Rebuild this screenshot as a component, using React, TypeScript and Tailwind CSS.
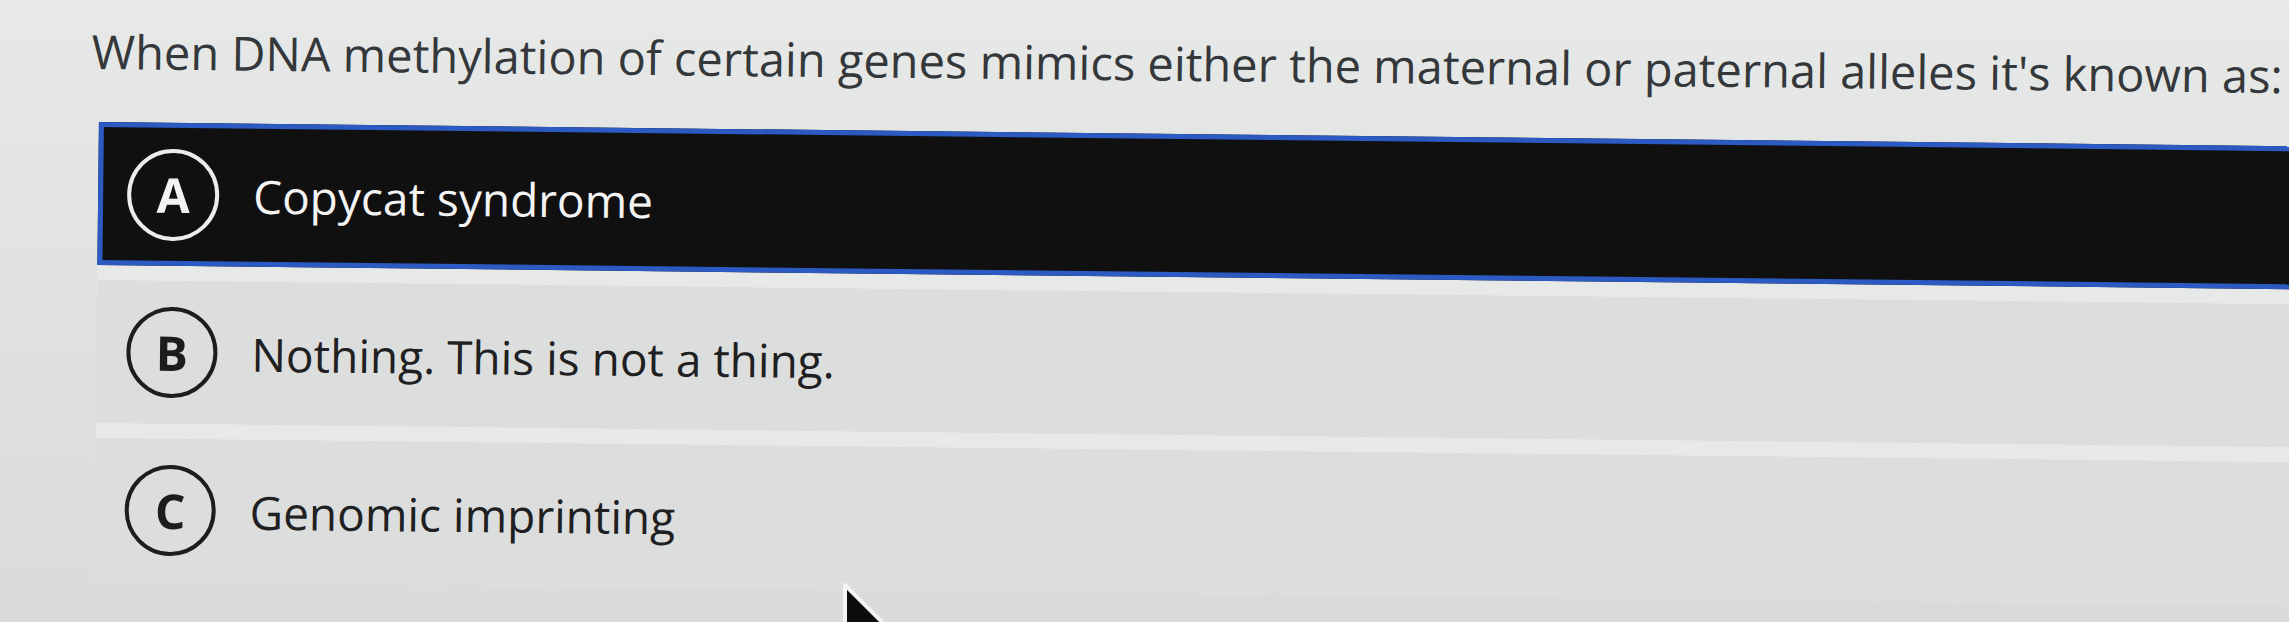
import React from 'react';

type Choice = {
  letter: string;
  text: string;
  selected?: boolean;
};

const choices: Choice[] = [
  { letter: 'A', text: 'Copycat syndrome', selected: true },
  { letter: 'B', text: 'Nothing. This is not a thing.' },
  { letter: 'C', text: 'Genomic imprinting' },
];

const ChoiceRow: React.FC<{ choice: Choice }> = ({ choice }) => {
  const { letter, text, selected } = choice;

  return (
    <div
      className={
        selected
          ? 'h-[143px] flex items-center pl-[24px] bg-[#101010] border-y-[5px] border-l-[5px] border-[#2a5ac2]'
          : 'h-[143px] flex items-center pl-[30px] bg-[#dcdedd]'
      }
    >
      {/* letter badge */}
      <div
        className={
          selected
            ? 'w-[92px] h-[92px] shrink-0 rounded-full border-[4px] border-[#ececec] flex items-center justify-center text-[48px] font-bold text-[#f2f2f2]'
            : 'w-[91px] h-[91px] shrink-0 rounded-full border-[4px] border-[#1c1d1e] flex items-center justify-center text-[48px] font-bold text-[#1c1d1e]'
        }
      >
        {letter}
      </div>
      <span
        className={
          selected
            ? 'ml-[34px] text-[46px] leading-none text-[#f4f4f4]'
            : 'ml-[34px] text-[46px] leading-none text-[#1e2022]'
        }
      >
        {text}
      </span>
    </div>
  );
};

export default function App() {
  return (
    <div
      className="relative w-full h-[622px] overflow-hidden bg-gradient-to-b from-[#e7e9e8] to-[#d9dbda]"
      style={{ fontFamily: '"Open Sans", "Noto Sans", sans-serif' }}
    >
      <div className="w-[2440px] origin-[0_300px] rotate-[0.63deg] pt-[19px] pl-[89px]">
        <p className="text-[47px] leading-[63px] text-[#35383b] whitespace-nowrap">
          When DNA methylation of certain genes mimics either the maternal or paternal alleles it's known as:
        </p>

        <div className="mt-[39px] ml-[8px] flex flex-col gap-[15px] bg-[#e7e9e8]">
          {choices.map((c) => (
            <ChoiceRow key={c.letter} choice={c} />
          ))}
        </div>
      </div>

      {/* mouse pointer */}
      <svg
        className="absolute left-[841px] top-[580px]"
        width="64"
        height="90"
        viewBox="0 0 16 22"
      >
        <path
          d="M1 1 L1 18 L5 14 L8 21 L10.5 20 L7.5 13 L13 13 Z"
          fill="#0c0c0c"
          stroke="#f4f4f4"
          strokeWidth="1"
          strokeLinejoin="round"
        />
      </svg>
    </div>
  );
}
